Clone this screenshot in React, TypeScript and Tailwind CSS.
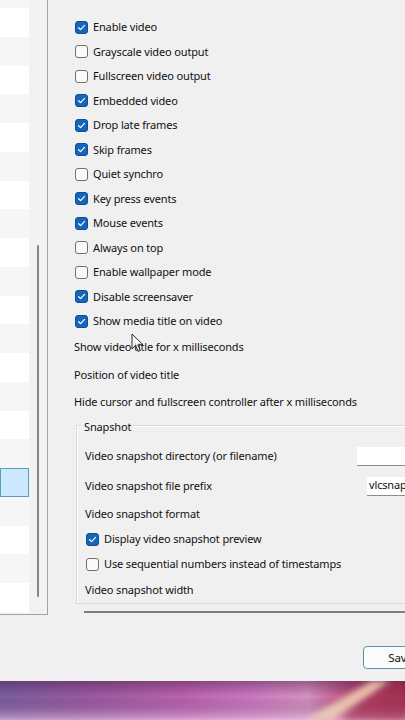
import React from "react";

type Row = { label: string; checked: boolean };

const videoOptions: Row[] = [
  { label: "Enable video", checked: true },
  { label: "Grayscale video output", checked: false },
  { label: "Fullscreen video output", checked: false },
  { label: "Embedded video", checked: true },
  { label: "Drop late frames", checked: true },
  { label: "Skip frames", checked: true },
  { label: "Quiet synchro", checked: false },
  { label: "Key press events", checked: true },
  { label: "Mouse events", checked: true },
  { label: "Always on top", checked: false },
  { label: "Enable wallpaper mode", checked: false },
  { label: "Disable screensaver", checked: true },
  { label: "Show media title on video", checked: true },
];

const Check = ({ checked }: { checked: boolean }) =>
  checked ? (
    <span className="flex h-[13px] w-[13px] shrink-0 items-center justify-center rounded-[3px] border border-[#0c4f96] bg-[#1565b8]">
      <svg width="9" height="9" viewBox="0 0 9 9">
        <path
          d="M1.6 4.7 L3.6 6.6 L7.5 2.4"
          stroke="white"
          strokeWidth="1.2"
          fill="none"
          strokeLinecap="round"
          strokeLinejoin="round"
        />
      </svg>
    </span>
  ) : (
    <span className="h-[13px] w-[13px] shrink-0 rounded-[3px] border border-[#707070] bg-[#fafafa]" />
  );

// tree list on the left, mostly scrolled out of view
const TreePanel = () => {
  const rows = Array.from({ length: 22 }, (_, i) => i);
  return (
    <div className="flex h-[615px] w-[48px] shrink-0 border-r border-b border-[#a3a3a3] bg-white">
      <div className="flex w-[29px] flex-col overflow-hidden">
        <div className="h-[8px] shrink-0 bg-[#f6f6f6]" />
        {rows.map((i) =>
          i === 16 ? (
            <div key={i} className="h-[28.75px] shrink-0 border border-[#5e9db8] bg-[#cce8ff]" />
          ) : (
            <div
              key={i}
              className={`h-[28.75px] shrink-0 ${i % 2 === 0 ? "bg-white" : "bg-[#f6f6f6]"}`}
            />
          )
        )}
      </div>
      <div className="flex w-[18px] flex-col bg-[#f2f2f2] pt-[245px] pl-[8px]">
        <div className="h-[352px] w-[2px] rounded-full bg-[#858585]" />
      </div>
    </div>
  );
};

const Wallpaper = () => (
  <svg width="405" height="39" viewBox="0 0 405 39" className="block">
    <defs>
      <linearGradient id="base" x1="0" y1="0" x2="1" y2="0">
        <stop offset="0" stopColor="#7a5ea0" />
        <stop offset="0.22" stopColor="#9a5aa0" />
        <stop offset="0.45" stopColor="#bb62b0" />
        <stop offset="0.62" stopColor="#cc78c2" />
        <stop offset="0.76" stopColor="#d592c0" />
        <stop offset="0.86" stopColor="#bd4f80" />
        <stop offset="1" stopColor="#9c2e54" />
      </linearGradient>
      <linearGradient id="shade" x1="0" y1="0" x2="0" y2="1">
        <stop offset="0" stopColor="#3a1238" stopOpacity="0.4" />
        <stop offset="0.4" stopColor="#3a1238" stopOpacity="0" />
        <stop offset="1" stopColor="#f6d8f6" stopOpacity="0.55" />
      </linearGradient>
      <filter id="blur" x="-50%" y="-50%" width="200%" height="200%">
        <feGaussianBlur stdDeviation="3" />
      </filter>
    </defs>
    <rect width="405" height="39" fill="url(#base)" />
    <rect width="405" height="39" fill="url(#shade)" />
    <polygon points="372,0 392,0 332,39 305,39" fill="#f3d6b4" opacity="0.85" filter="url(#blur)" />
    <polygon points="392,0 405,0 405,39 340,39" fill="#a8304f" opacity="0.55" filter="url(#blur)" />
  </svg>
);

const Cursor = () => (
  <svg
    width="14"
    height="20"
    viewBox="0 0 14 20"
    className="pointer-events-none absolute left-[131px] top-[333px]"
  >
    <path
      d="M1 1 L1 16 L4.6 12.6 L7.2 18.4 L9.4 17.4 L6.9 11.8 L11.8 11.6 Z"
      fill="rgba(255,255,255,0.6)"
      stroke="#2a2a2a"
      strokeWidth="1"
      strokeLinejoin="round"
    />
  </svg>
);

export default function App() {
  return (
    <div className="relative h-[720px] w-[405px] overflow-hidden font-['Noto_Sans',sans-serif] text-[11px] tracking-[-0.15px] text-[#111]">
      <div className="flex h-[681px] bg-[#f0f0f0]">
        <TreePanel />

        <div className="flex min-w-0 flex-1 flex-col pt-[15px] pl-[26px]">
          {videoOptions.map((o) => (
            <div key={o.label} className="flex h-[24.5px] shrink-0 items-center gap-[5px] pl-[1px] whitespace-nowrap">
              <Check checked={o.checked} />
              <span>{o.label}</span>
            </div>
          ))}

          <div className="flex h-[27.5px] shrink-0 items-center whitespace-nowrap">
            Show video title for x milliseconds
          </div>
          <div className="flex h-[27.5px] shrink-0 items-center whitespace-nowrap">
            Position of video title
          </div>
          <div className="flex h-[27.5px] shrink-0 items-center whitespace-nowrap">
            Hide cursor and fullscreen controller after x milliseconds
          </div>

          {/* Snapshot group */}
          <div className="relative mt-[9px] ml-[2px] w-[420px] shrink-0 border border-[#dadada] pt-[15px] pl-[8px] shadow-[inset_1px_1px_0_#ffffff]">
            <span className="absolute -top-[7px] left-[5px] bg-[#f0f0f0] px-[2px] leading-[16px]">
              Snapshot
            </span>
            <div className="flex h-[30px] items-center whitespace-nowrap">
              <span className="w-[272px] shrink-0">Video snapshot directory (or filename)</span>
              <span className="h-[19px] w-[80px] shrink-0 border-b border-[#8c8c8c] bg-white" />
            </div>
            <div className="flex h-[30px] items-center whitespace-nowrap">
              <span className="w-[282px] shrink-0">Video snapshot file prefix</span>
              <span className="flex h-[19px] w-[70px] shrink-0 items-center border-b border-[#8c8c8c] bg-white pl-[2px]">
                vlcsnap
              </span>
            </div>
            <div className="flex h-[26px] items-center whitespace-nowrap">Video snapshot format</div>
            <div className="flex h-[24px] items-center gap-[5px] pl-[1px] whitespace-nowrap">
              <Check checked />
              <span>Display video snapshot preview</span>
            </div>
            <div className="flex h-[26px] items-center gap-[5px] pl-[1px] whitespace-nowrap">
              <Check checked={false} />
              <span>Use sequential numbers instead of timestamps</span>
            </div>
            <div className="flex h-[26px] items-center whitespace-nowrap">Video snapshot width</div>
          </div>

          <div className="mt-[7px] ml-[10px] h-[2px] w-[400px] shrink-0 bg-[#7d7d7d]" />

          <div className="mt-[33px] ml-[289px] flex shrink-0">
            <button className="h-[23px] w-[75px] shrink-0 rounded-[4px] border border-[#5e93a6] bg-[#fbfbfb] text-[11.5px] text-[#111]">
              Save
            </button>
          </div>
        </div>
      </div>
      <Wallpaper />
      <Cursor />
    </div>
  );
}
